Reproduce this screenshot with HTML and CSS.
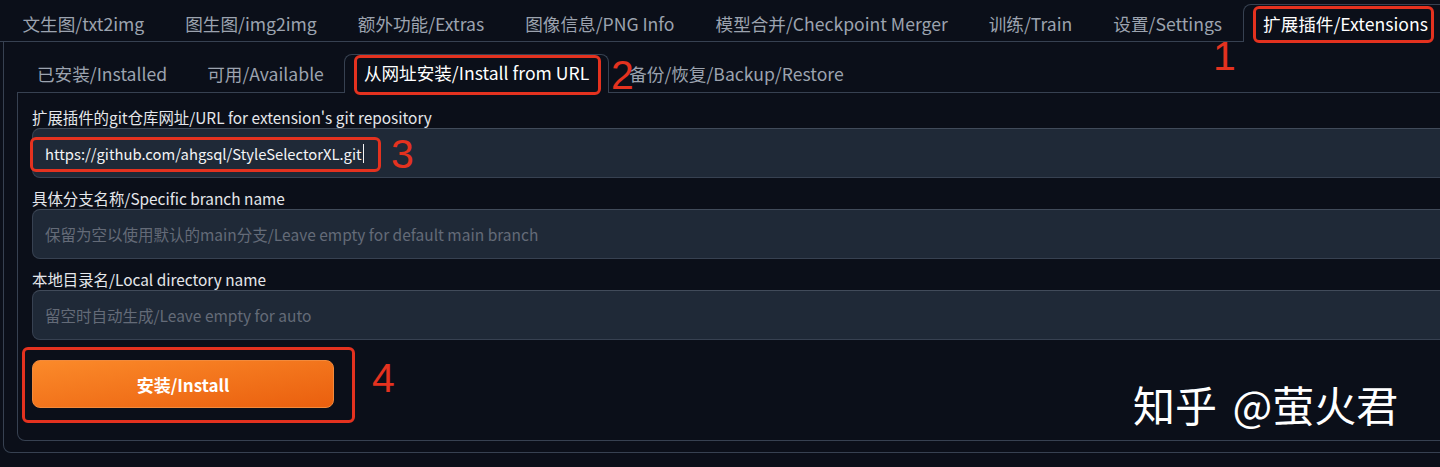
FILE: index.html
```html
<!DOCTYPE html>
<html lang="zh-CN">
<head>
  <meta charset="UTF-8">
  <meta name="viewport" content="width=device-width, initial-scale=1.0">
  <link rel="stylesheet" href="styles.css">
</head>
<body>
  <div class="app">
    <nav class="tabs tabs-main">
      <button class="tab">文生图/txt2img</button>
      <button class="tab">图生图/img2img</button>
      <button class="tab">额外功能/Extras</button>
      <button class="tab">图像信息/PNG Info</button>
      <button class="tab">模型合并/Checkpoint Merger</button>
      <button class="tab">训练/Train</button>
      <button class="tab">设置/Settings</button>
      <button class="tab selected">扩展插件/Extensions</button>
    </nav>

    <div class="panel panel-main">
      <nav class="tabs tabs-sub">
        <button class="tab">已安装/Installed</button>
        <button class="tab">可用/Available</button>
        <button class="tab selected">从网址安装/Install from URL</button>
        <button class="tab">备份/恢复/Backup/Restore</button>
      </nav>

      <div class="panel panel-sub">
        <div class="field">
          <label>扩展插件的git仓库网址/URL for extension's git repository</label>
          <div class="input filled">https://github.com/ahgsql/StyleSelectorXL.git<span class="caret"></span></div>
        </div>
        <div class="field">
          <label for="branch">具体分支名称/Specific branch name</label>
          <input class="input" id="branch" type="text" placeholder="保留为空以使用默认的main分支/Leave empty for default main branch">
        </div>
        <div class="field">
          <label for="dir">本地目录名/Local directory name</label>
          <input class="input" id="dir" type="text" placeholder="留空时自动生成/Leave empty for auto">
        </div>
        <button class="btn-install">安装/Install</button>
      </div>
    </div>

    <!-- annotations drawn over the screenshot -->
    <div class="mark mark-1"></div><span class="num num-1">1</span>
    <div class="mark mark-2"></div><span class="num num-2">2</span>
    <div class="mark mark-3"></div><span class="num num-3">3</span>
    <div class="mark mark-4"></div><span class="num num-4">4</span>

    <div class="watermark">知乎 @萤火君</div>
  </div>
</body>
</html>
```

FILE: styles.css
```css
* {
  box-sizing: border-box;
}

body {
  margin: 0;
  background-color: #0b0f19;
  overflow: hidden;
  font-family: "Noto Sans CJK SC", "Noto Sans", sans-serif;
  color: #e5e7eb;
}

.app {
  position: relative;
  width: 1500px;
  height: 467px;
}

.tabs {
  display: flex;
  align-items: flex-end;
  border-bottom: 1px solid #374151;
}

.tabs-main {
  height: 42px;
  padding-left: 2px;
}

.tabs-sub {
  height: 39px;
}

.tab {
  font-family: inherit;
  font-size: 17.6px;
  line-height: 24px;
  color: #9ca3af;
  background: none;
  border: 1px solid transparent;
  border-bottom: none;
  border-radius: 8px 8px 0 0;
  padding: 0 19px;
  height: 37px;
  margin-bottom: -1px;
  white-space: nowrap;
  cursor: pointer;
}

.tabs-main .tab {
  padding: 0 19.5px;
}

.tabs-sub .tab {
  padding-bottom: 2px;
}

.tab.selected {
  color: #fff;
  background-color: #0b0f19;
  border-color: #374151;
  height: 38px;
}

.tabs-sub .tab.selected {
  height: 39px;
}

.panel {
  border: 1px solid #374151;
  border-top: none;
  border-radius: 0 0 8px 8px;
}

.panel-main {
  margin-left: 3px;
  height: 411px;
  padding: 12px 0 0 13px;
}

.panel-sub {
  height: 348px;
  padding: 14px 0 0 14px;
}

.field {
  display: flex;
  flex-direction: column;
  gap: 1px;
  margin-bottom: 10px;
}

.field label {
  font-size: 15.4px;
  line-height: 20px;
  color: #e5e7eb;
}

.input {
  display: flex;
  align-items: center;
  height: 50px;
  width: 100%;
  padding: 0 12px;
  font-family: inherit;
  font-size: 15.5px;
  color: #f3f4f6;
  background-color: #1f2937;
  border: 1px solid #374151;
  border-top-color: #414b5a;
  border-radius: 8px;
  outline: none;
}

.input::placeholder {
  color: #646b78;
}

.filled {
  padding-top: 1px;
  font-size: 14.8px;
}

.caret {
  display: inline-block;
  width: 1px;
  height: 19px;
  margin-left: 1px;
  background-color: #f3f4f6;
}

.btn-install {
  margin-top: 10px;
  width: 302px;
  height: 48px;
  font-family: inherit;
  font-size: 17px;
  font-weight: 700;
  color: #fff;
  background: linear-gradient(to bottom right, #fb8a2a, #ea5f0e);
  border: 1px solid #f28a3c;
  border-radius: 8px;
  cursor: pointer;
}

.mark {
  position: absolute;
  border: 3px solid #e4321f;
  border-radius: 6px;
}

.mark-1 { left: 1253px; top: 6px; width: 181px; height: 37px; }
.mark-2 { left: 354px; top: 55px; width: 247px; height: 40px; }
.mark-3 { left: 30px; top: 137px; width: 351px; height: 35px; }
.mark-4 { left: 22px; top: 347px; width: 333px; height: 76px; }

.num {
  position: absolute;
  font-family: "Liberation Sans", Arial, sans-serif;
  font-size: 41px;
  line-height: 1;
  color: #e4321f;
}

.num-1 { left: 1213px; top: 36px; }
.num-2 { left: 611px; top: 55px; }
.num-3 { left: 391px; top: 134px; }
.num-4 { left: 372px; top: 358px; }

.watermark {
  position: absolute;
  left: 1133px;
  top: 383px;
  font-size: 42px;
  line-height: 1;
  word-spacing: 6px;
  color: #fff;
  white-space: nowrap;
}
```
